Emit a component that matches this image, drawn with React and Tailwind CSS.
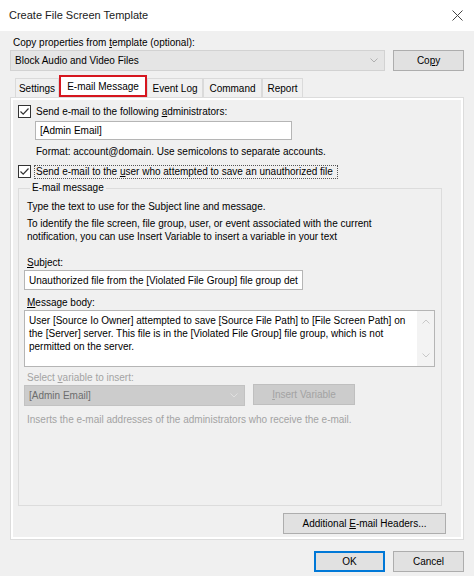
import React from 'react';

const Check = () => (
    <div className="w-[13px] h-[13px] shrink-0 border border-[#333] bg-white flex items-center justify-center">
        <svg width="11" height="11" viewBox="0 0 11 11" fill="none" stroke="#333" strokeWidth="1.2">
            <path d="M1.5 5.5 L4.2 8.2 L9.5 2.5" />
        </svg>
    </div>
);

const Chevron = ({ color = '#9a9a9a', up = false }) => (
    <svg width="8" height="5" viewBox="0 0 8 5" fill="none" stroke={color} strokeWidth="1">
        <path d={up ? 'M0.5 4.5 L4 1 L7.5 4.5' : 'M0.5 0.5 L4 4 L7.5 0.5'} />
    </svg>
);

const Btn = ({ children, className = '' }) => (
    <div className={`h-[21px] flex items-center justify-center bg-[#e1e1e1] border border-[#adadad] ${className}`}>
        {children}
    </div>
);

const Tab = ({ children, className = '' }) => (
    <div className={`h-[19px] px-[4px] flex items-center border-t border-x border-[#dadada] bg-[#f0f0f0] ${className}`}>
        {children}
    </div>
);

const App = () => {
    return (
        <div className="w-[474px] h-[580px] bg-white text-black text-[10px] leading-[13px]" style={{ fontFamily: '"Liberation Sans", Arial, sans-serif' }}>
            {/* Title bar */}
            <div className="h-[31px] flex items-center justify-between pl-[9px] pr-[11px]">
                <span className="text-[11px] text-[#1a1a1a]">Create File Screen Template</span>
                <svg width="11" height="11" viewBox="0 0 11 11" stroke="#444" strokeWidth="1">
                    <path d="M0.5 0.5 L10.5 10.5 M10.5 0.5 L0.5 10.5" />
                </svg>
            </div>

            {/* Body */}
            <div className="h-[545px] bg-[#f0f0f0] px-[10px] pt-[5px] flex flex-col">
                <div className="h-[13px] pl-[3px]">
                    Copy properties from <span className="underline">t</span>emplate (optional):
                </div>
                <div className="mt-[1px] flex gap-[8px]">
                    <div className="w-[376px] h-[21px] bg-[#e5e5e5] border border-[#d2d2d2] flex items-center justify-between pl-[4px] pr-[6px]">
                        <span>Block Audio and Video Files</span>
                        <Chevron color="#b0b0b0" />
                    </div>
                    <Btn className="w-[71px]">
                        Co<span className="underline">p</span>y
                    </Btn>
                </div>

                {/* Tabs */}
                <div className="mt-[4px] h-[22px] flex items-end pl-[5px]">
                    <Tab className="w-[44px] justify-center">Settings</Tab>
                    <div className="h-[22px] w-[88px] bg-white border-2 border-[#d6161f] flex items-center justify-center">
                        E-mail Message
                    </div>
                    <Tab className="w-[56px] justify-center">Event Log</Tab>
                    <Tab className="w-[59px] justify-center">Command</Tab>
                    <Tab className="w-[41px] justify-center">Report</Tab>
                </div>

                {/* Tab page */}
                <div className="w-[454px] h-[443px] border border-[#dcdcdc] bg-[#f0f0f0] shadow-[inset_0_0_0_2px_#ffffff] flex flex-col pl-[7px]">
                    <div className="mt-[7px] flex items-center gap-[5px] h-[13px]">
                        <Check />
                        <span>Send e-mail to the following <span className="underline">a</span>dministrators:</span>
                    </div>
                    <div className="mt-[3px] ml-[17px] w-[257px] h-[19px] bg-white border border-[#b5b5b5] flex items-center pl-[4px]">
                        [Admin Email]
                    </div>
                    <div className="mt-[4px] ml-[18px] h-[14px] flex items-center">
                        Format: account@domain. Use semicolons to separate accounts.
                    </div>
                    <div className="mt-[7px] flex items-center gap-[4px] h-[13px]">
                        <Check />
                        <span className="outline outline-1 outline-dotted outline-[#555] pl-[1px] pr-[4px] leading-[12px]">
                            Send e-mail to the <span className="underline">u</span>ser who attempted to save an unauthorized file
                        </span>
                    </div>

                    {/* Group box */}
                    <fieldset className="mt-[3px] w-[424px] h-[325px] border border-[#dcdcdc] pl-[5px] pr-[6px]">
                        <legend className="ml-[6px] px-[2px] leading-[14px]">E-mail message</legend>
                        <div className="mt-[5px] pl-[3px] h-[14px]">Type the text to use for the Subject line and message.</div>
                        <div className="mt-[3px] pl-[3px] leading-[13px]">
                            To identify the file screen, file group, user, or event associated with the current
                            <br />
                            notification, you can use Insert Variable to insert a variable in your text
                        </div>
                        <div className="mt-[13px] pl-[3px] h-[14px]">
                            <span className="underline">S</span>ubject:
                        </div>
                        <div className="w-[279px] h-[20px] bg-white border border-[#b5b5b5] flex items-center pl-[4px] whitespace-nowrap">
                            Unauthorized file from the [Violated File Group] file group det
                        </div>
                        <div className="mt-[6px] pl-[3px] h-[14px]">
                            <span className="underline">M</span>essage body:
                        </div>
                        <div className="w-[411px] h-[57px] bg-white border border-[#b5b5b5] flex">
                            <div className="flex-1 pl-[4px] pt-[3px] leading-[13px]">
                                User [Source Io Owner] attempted to save [Source File Path] to [File Screen Path] on
                                <br />
                                the [Server] server. This file is in the [Violated File Group] file group, which is not
                                <br />
                                permitted on the server.
                            </div>
                            <div className="w-[17px] bg-[#f3f3f3] flex flex-col items-center justify-between py-[8px]">
                                <Chevron up color="#c8c8c8" />
                                <Chevron color="#c8c8c8" />
                            </div>
                        </div>
                        <div className="mt-[4px] pl-[3px] h-[14px] text-[#a3a3a3]">
                            Select <span className="underline">v</span>ariable to insert:
                        </div>
                        <div className="flex items-start gap-[8px]">
                            <div className="w-[221px] h-[21px] bg-[#cccccc] border border-[#c2c2c2] flex items-center justify-between pl-[4px] pr-[6px] text-[#6d6d6d]">
                                <span>[Admin Email]</span>
                                <Chevron color="#e0e0e0" />
                            </div>
                            <div className="-mt-[1px] w-[102px] h-[21px] bg-[#cccccc] border border-[#bfbfbf] flex items-center justify-center text-[#a3a3a3]">
                                <span><span className="underline">I</span>nsert Variable</span>
                            </div>
                        </div>
                        <div className="mt-[7px] pl-[3px] h-[14px] text-[#a3a3a3]">
                            Inserts the e-mail addresses of the administrators who receive the e-mail.
                        </div>
                    </fieldset>

                    <div className="mt-[7px] flex justify-end pr-[17px]">
                        <Btn className="w-[163px]">
                            <span>Additional <span className="underline">E</span>-mail Headers...</span>
                        </Btn>
                    </div>
                </div>

                {/* Dialog buttons */}
                <div className="mt-[11px] flex justify-end gap-[8px]">
                    <div className="w-[71px] h-[21px] flex items-center justify-center bg-[#e1e1e1] border-2 border-[#0078d7]">
                        OK
                    </div>
                    <Btn className="w-[71px]">Cancel</Btn>
                </div>
            </div>
        </div>
    );
};

export default App;
